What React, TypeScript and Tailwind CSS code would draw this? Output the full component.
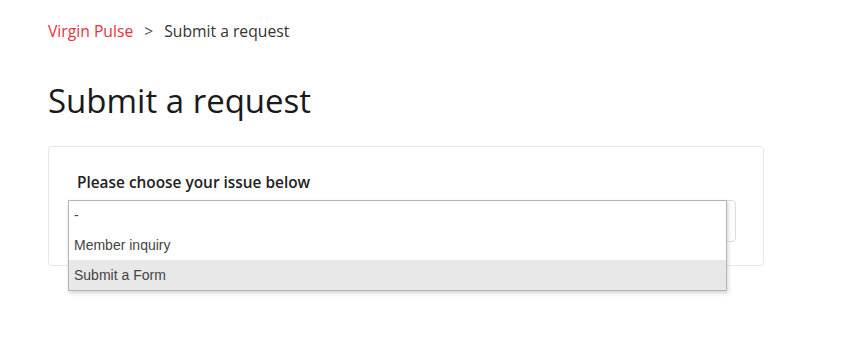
import React from "react";

export default function App() {
  return (
    <div className="w-[864px] h-[345px] bg-white overflow-hidden" style={{ fontFamily: '"Open Sans", "Noto Sans", sans-serif' }}>
      <div className="pl-[48px] pt-[20px]">
        <nav className="flex items-center text-[15.7px] leading-[22px] text-[#333]">
          <span className="text-[#e5323e]">Virgin Pulse</span>
          <span className="mx-[11px] text-[#555]">&gt;</span>
          <span>Submit a request</span>
        </nav>
        <h1 className="mt-[37px] text-[33px] leading-[44px] text-[#1a1a1a] font-normal">Submit a request</h1>
        <div className="mt-[23px] w-[716px] h-[120px] border border-[#e6e6e6] rounded-[4px] relative">
          <div className="pl-[28px] pt-[25px]">
            <label className="block text-[15.4px] leading-[22px] font-semibold text-[#222]">Please choose your issue below</label>
          </div>
          <div className="ml-[20px] mt-[6px] w-[667px] h-[42px] border border-[#dcdcdc] rounded-[4px]"></div>
          <div
            className="absolute left-[19px] top-[53px] w-[659px] bg-white border border-[#b5b5b5] shadow-[1px_2px_4px_rgba(0,0,0,0.18)] text-[14px] text-[#444]"
            style={{ fontFamily: '"Liberation Sans", Arial, sans-serif' }}
          >
            <div className="h-[29px] flex items-center pl-[5px]">-</div>
            <div className="h-[30px] flex items-center pl-[5px]">Member inquiry</div>
            <div className="h-[30px] flex items-center pl-[5px] bg-[#e8e8e8]">Submit a Form</div>
          </div>
        </div>
      </div>
    </div>
  );
}
